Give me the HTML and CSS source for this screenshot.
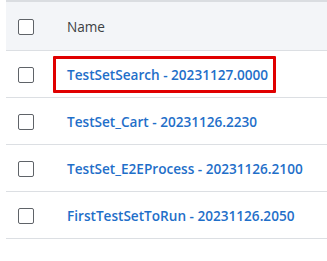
FILE: index.html
```html
<!DOCTYPE html>
<html>
<head>
<meta charset="utf-8">
<link rel="stylesheet" href="styles.css">
</head>
<body>
<div class="table">
  <div class="row head">
    <div class="cell-check"><span class="checkbox"></span></div>
    <div class="cell-name">Name</div>
  </div>
  <div class="row">
    <div class="cell-check"><span class="checkbox"></span></div>
    <div class="cell-name"><a class="link highlighted">TestSetSearch - 20231127.0000</a></div>
  </div>
  <div class="row">
    <div class="cell-check"><span class="checkbox"></span></div>
    <div class="cell-name"><a class="link">TestSet_Cart - 20231126.2230</a></div>
  </div>
  <div class="row">
    <div class="cell-check"><span class="checkbox"></span></div>
    <div class="cell-name"><a class="link">TestSet_E2EProcess - 20231126.2100</a></div>
  </div>
  <div class="row">
    <div class="cell-check"><span class="checkbox"></span></div>
    <div class="cell-name"><a class="link">FirstTestSetToRun - 20231126.2050</a></div>
  </div>
</div>
</body>
</html>
```
FILE: styles.css
```css
html, body {
  margin: 0;
  padding: 0;
  background: #ffffff;
}
body {
  font-family: "Open Sans", "Noto Sans", sans-serif;
  font-size: 13.6px;
}
.table {
  margin-left: 6px;
  border-top: 2px solid #dadde1;
  display: flex;
  flex-direction: column;
}
.row {
  display: flex;
  align-items: center;
  height: 46px;
  border-bottom: 1px solid #dcdfe3;
}
.row.head {
  height: 48px;
  background: #f3f5f8;
}
.cell-check {
  width: 61px;
  padding-left: 12px;
  box-sizing: border-box;
  display: flex;
  align-items: center;
}
.checkbox {
  width: 16px;
  height: 16px;
  box-sizing: border-box;
  border: 1.5px solid #5f6368;
  border-radius: 2px;
  background: #fff;
  margin-top: 1px;
}
.cell-name {
  color: #3c4043;
  font-weight: 400;
}
.link {
  color: #1f6fc9;
  font-weight: 600;
  text-decoration: none;
  position: relative;
}
.highlighted::after {
  content: "";
  position: absolute;
  left: -14px;
  right: -8px;
  top: -9px;
  bottom: -9px;
  border: 3px solid #e00000;
  border-radius: 1px;
}
```
